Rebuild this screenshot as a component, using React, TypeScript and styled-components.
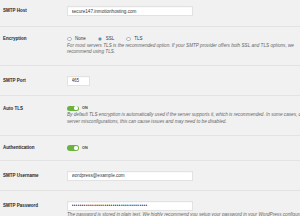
import React from "react";
import styled, { createGlobalStyle } from "styled-components";

const GlobalStyle = createGlobalStyle`
  html, body {
    margin: 0;
    padding: 0;
    background: #f1f1f1;
    overflow: hidden;
    font-family: "Liberation Sans", Arial, sans-serif;
  }
`;

const App: React.FC = () => {
  return (
    <>
      <GlobalStyle />
      <Form>
        <Row>
          <Label $lh={10}>SMTP Host</Label>
          <Cell>
            <Input $w={126} readOnly value="secure147.inmotionhosting.com" />
          </Cell>
        </Row>
        <Row>
          <Label $lh={5.5}>Encryption</Label>
          <Cell>
            <Options>
              <Option>
                <Radio />
                None
              </Option>
              <Option>
                <Radio $checked />
                SSL
              </Option>
              <Option>
                <Radio />
                TLS
              </Option>
            </Options>
            <Desc>
              For most servers TLS is the recommended option. If your SMTP
              provider offers both SSL and TLS options, we recommend using TLS.
            </Desc>
          </Cell>
        </Row>
        <Row>
          <Label $lh={10}>SMTP Port</Label>
          <Cell>
            <Input $w={23} readOnly value="465" />
          </Cell>
        </Row>
        <Row>
          <Label $lh={5.5}>Auto TLS</Label>
          <Cell>
            <ToggleLine>
              <Toggle />
              <ToggleText>On</ToggleText>
            </ToggleLine>
            <Desc>
              By default TLS encryption is automatically used if the server
              supports it, which is recommended. In some cases, due to server
              misconfigurations, this can cause issues and may need to be
              disabled.
            </Desc>
          </Cell>
        </Row>
        <Row>
          <Label $lh={5.5}>Authentication</Label>
          <Cell>
            <ToggleLine>
              <Toggle />
              <ToggleText>On</ToggleText>
            </ToggleLine>
          </Cell>
        </Row>
        <Row>
          <Label $lh={10}>SMTP Username</Label>
          <Cell>
            <Input $w={126} readOnly value="wordpress@example.com" />
          </Cell>
        </Row>
        <Row>
          <Label $lh={10}>SMTP Password</Label>
          <Cell>
            <Input
              $w={126}
              $dots
              readOnly
              value={"\u2022".repeat(37)}
            />
            <Desc>
              The password is stored in plain text. We highly recommend you
              setup your password in your WordPress configuration file for
              improved security.
            </Desc>
          </Cell>
        </Row>
      </Form>
    </>
  );
};

export default App;

const Form = styled.div`
  width: 320px;
  margin-top: -3.5px;
`;

const Row = styled.div`
  display: grid;
  grid-template-columns: 67px 1fr;
  align-items: start;
  padding: 9.5px 0;
  border-bottom: 1px solid #e3e3e3;
`;

const Label = styled.div<{ $lh: number }>`
  padding-left: 3px;
  font-size: 4.5px;
  font-weight: 700;
  color: #23282d;
  line-height: ${({ $lh }) => $lh}px;
  white-space: nowrap;
`;

const Cell = styled.div`
  display: flex;
  flex-direction: column;
  align-items: flex-start;
`;

const Input = styled.input<{ $w: number; $dots?: boolean }>`
  box-sizing: border-box;
  width: ${({ $w }) => $w}px;
  height: 10px;
  margin: 0;
  padding: 0 3.5px;
  border: 0.5px solid #e2e2e2;
  border-radius: 0;
  background: #fff;
  box-shadow: inset 0 0.5px 1px rgba(0, 0, 0, 0.05);
  font-family: "Liberation Sans", Arial, sans-serif;
  font-size: 4.6px;
  color: #32373c;
  letter-spacing: ${({ $dots }) => ($dots ? "0.45px" : "0")};
  outline: none;
`;

const Options = styled.div`
  display: flex;
  align-items: center;
  height: 5.5px;
`;

const Option = styled.label`
  display: flex;
  align-items: center;
  gap: 3.5px;
  margin-right: 12px;
  font-size: 4.5px;
  color: #32373c;
`;

const Radio = styled.span<{ $checked?: boolean }>`
  box-sizing: border-box;
  width: 4.5px;
  height: 4.5px;
  border-radius: 50%;
  border: 0.5px solid #b4b9be;
  background: #fff;
  display: flex;
  align-items: center;
  justify-content: center;

  &::after {
    content: "";
    width: 1.6px;
    height: 1.6px;
    border-radius: 50%;
    background: #1e8cbe;
    display: ${({ $checked }) => ($checked ? "block" : "none")};
  }
`;

const Desc = styled.p`
  margin: 1px 0 0;
  max-width: 248px;
  font-size: 4.67px;
  font-style: italic;
  line-height: 6.5px;
  color: #666;
`;

const ToggleLine = styled.div`
  display: flex;
  align-items: center;
  height: 5.5px;
  gap: 3px;
`;

const Toggle = styled.span`
  position: relative;
  width: 12px;
  height: 5.5px;
  border-radius: 3px;
  background: #6bb33e;

  &::after {
    content: "";
    position: absolute;
    top: 0.9px;
    right: 1px;
    width: 3.7px;
    height: 3.7px;
    border-radius: 50%;
    background: #fff;
  }
`;

const ToggleText = styled.span`
  font-size: 3.8px;
  font-weight: 700;
  text-transform: uppercase;
  color: #444;
`;
